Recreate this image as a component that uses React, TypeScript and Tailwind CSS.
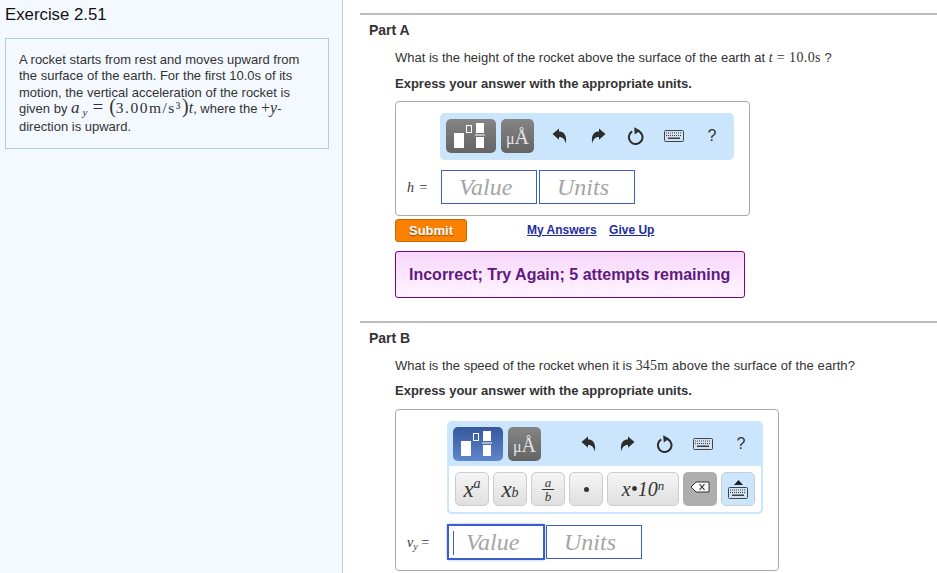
const SANS = "font-['Liberation_Sans',Arial,sans-serif]";
const SERIF = "font-['Liberation_Serif','Times_New_Roman',serif]";

function TemplateIcon() {
  return (
    <svg width="50" height="34" viewBox="0 0 50 34" fill="white">
      <rect x="8" y="14" width="10" height="15" />
      <rect x="20.5" y="6.5" width="5" height="7" fill="none" stroke="white" strokeWidth="1" />
      <rect x="30" y="4" width="8" height="10" />
      <rect x="29" y="15.5" width="10" height="1" />
      <rect x="30" y="18" width="8" height="11" />
    </svg>
  );
}

function UndoIcon({ flip = false }: { flip?: boolean }) {
  return (
    <svg width="15" height="16" viewBox="0 0 15 16" fill="#2c2c2c" className={flip ? "-scale-x-100" : "-translate-x-[1px]"}>
      <path d="M0.5 6 L7 0.5 L7 3.4 C11.8 3.4 15.2 6.8 13.8 15.5 C12.8 11.6 11.2 9 7 9 L7 11.8 Z" />
    </svg>
  );
}

function ResetIcon() {
  return (
    <svg width="18" height="18" viewBox="0 0 18 18" fill="none">
      <path d="M5.2 4.4 A6.8 6.8 0 1 0 11.4 4" stroke="#2c2c2c" strokeWidth="2" />
      <path d="M7.2 0.2 L13.2 3.6 L7.8 7.4 Z" fill="#2c2c2c" />
    </svg>
  );
}

function KeyboardIcon() {
  return (
    <svg width="20" height="12" viewBox="0 0 20 12">
      <rect x="0.5" y="0.5" width="19" height="11" rx="1" fill="#d5e2ee" stroke="#3c4650" />
      <path d="M2 3h16M2 5.5h16" stroke="#36404a" strokeWidth="1.2" strokeDasharray="1 1" />
      <path d="M4 8.3h12" stroke="#36404a" strokeWidth="1.4" />
    </svg>
  );
}

function Cell({ children }: { children: React.ReactNode }) {
  return <div className="flex h-[34px] w-[38px] items-center justify-center">{children}</div>;
}

function Key({ w = "w-[34px]", children }: { w?: string; children: React.ReactNode }) {
  return (
    <div
      className={`flex h-[34px] ${w} items-center justify-center rounded-[5px] border border-[#ccc] bg-gradient-to-b from-[#f5f5f5] to-[#e0e0e0] ${SERIF} text-[#333]`}
    >
      {children}
    </div>
  );
}

function KeyRow() {
  return (
    <div className="flex h-[48px] items-center gap-[4px] rounded-b-[5px] border-x-2 border-b-2 border-[#cbe5fd] bg-white pl-[6px]">
      <Key>
        <span className="text-[23px] italic leading-none">x</span>
        <span className="mb-[10px] text-[14px] italic leading-none">a</span>
      </Key>
      <Key>
        <span className="text-[23px] italic leading-none">x</span>
        <span className="mt-[8px] text-[14px] italic leading-none">b</span>
      </Key>
      <Key>
        <div className="flex flex-col items-center text-[13px] italic leading-[13px]">
          <span className="border-b border-[#333] px-[3px]">a</span>
          <span>b</span>
        </div>
      </Key>
      <Key>
        <span className="h-[5px] w-[5px] rounded-full bg-[#333]" />
      </Key>
      <Key w="w-[72px]">
        <span className="text-[20px] italic leading-none">x•10</span>
        <span className="mb-[8px] text-[13px] italic leading-none">n</span>
      </Key>
      <div className="flex h-[34px] w-[34px] items-center justify-center rounded-[5px] bg-[#aeaeae] pb-[4px]">
        <svg width="20" height="12" viewBox="0 0 20 12">
          <path d="M6 1 H19 V11 H6 L1 6 Z" fill="white" stroke="#333" />
          <path d="M9.5 3.2 L14.5 8.8 M14.5 3.2 L9.5 8.8" stroke="#333" strokeWidth="1.1" />
        </svg>
      </div>
      <div className="flex h-[34px] w-[34px] flex-col items-center justify-center gap-[2px] rounded-[5px] border border-[#ccc] bg-[#cbe5fd]">
        <svg width="9" height="5" viewBox="0 0 9 5">
          <path d="M4.5 0 L9 5 H0 Z" fill="#222" />
        </svg>
        <KeyboardIcon />
      </div>
    </div>
  );
}

function Toolbar({ expanded, width, active }: { expanded: boolean; width: string; active: boolean }) {
  return (
    <div className={`${width} overflow-hidden rounded-[5px] bg-[#cbe5fd]`}>
      <div className={`flex items-start pl-[6px] pr-[3px] pt-[6px] ${expanded ? "h-[45px]" : "h-[47px]"}`}>
        <div
          className={`h-[34px] w-[50px] rounded-[5px] bg-gradient-to-b ${
            active ? "from-[#35589f] to-[#5f87cb]" : "from-[#858585] to-[#646464]"
          }`}
        >
          <TemplateIcon />
        </div>
        <div
          className={`ml-[5px] flex h-[34px] w-[33px] items-end justify-center rounded-[5px] bg-gradient-to-b from-[#858585] to-[#646464] pb-[6px] ${SERIF} text-[#e4e4e4]`}
        >
          <span className="text-[16px] leading-none">μ</span>
          <span className="text-[20px] leading-none">Å</span>
        </div>
        <div className="ml-auto flex">
          <Cell>
            <UndoIcon />
          </Cell>
          <Cell>
            <UndoIcon flip />
          </Cell>
          <Cell>
            <ResetIcon />
          </Cell>
          <Cell>
            <KeyboardIcon />
          </Cell>
          <Cell>
            <span className="text-[16px] text-[#333]">?</span>
          </Cell>
        </div>
      </div>
      {expanded && <KeyRow />}
    </div>
  );
}

function PlaceholderInput({ focused = false, label }: { focused?: boolean; label: string }) {
  return (
    <div
      className={`relative flex h-[34px] w-[96px] items-center border border-[#3a5fcd] bg-white pl-[17px] ${SERIF} text-[24px] italic text-[#a5a5a5] ${
        focused ? "shadow-[0_0_3px_#3a5fcd] ring-1 ring-[#3a5fcd]" : ""
      }`}
    >
      {focused && <span className="absolute left-[4px] top-[5px] h-[24px] w-px bg-[#3a5fcd]" />}
      {label}
    </div>
  );
}

export default function App() {
  return (
    <div className={`flex h-[573px] w-[937px] overflow-hidden bg-white ${SANS} text-[#333]`}>
      <aside className="h-full w-[343px] shrink-0 border-r border-[#b3cde0] bg-[#f4f9ff] pl-[5px] pt-[6px]">
        <h1 className="text-[16.8px] leading-[18px] text-[#111]">Exercise 2.51</h1>
        <div className="mt-[14px] h-[111px] w-[324px] border border-[#b3cde0] pl-[13px] pt-[13px] text-[13px] leading-[16.3px]">
          <p>A rocket starts from rest and moves upward from</p>
          <p>the surface of the earth. For the first 10.0s of its</p>
          <p>motion, the vertical acceleration of the rocket is</p>
          <p className="h-[17px] whitespace-nowrap">
            given by{" "}
            <span className={`${SERIF} text-[17px] italic leading-[0]`}>
              a<span className="relative top-[3px] ml-[3px] text-[11px] leading-[0]">y</span>
            </span>
            <span className={`${SERIF} ml-[5px] mr-[6px] text-[19px] leading-[0]`}>=</span>
            <span className={`${SERIF} text-[20px] leading-[0]`}>(</span>
            <span className={`${SERIF} text-[15.5px] leading-[0] tracking-[1.5px]`}>3.00m/s³</span>
            <span className={`${SERIF} text-[20px] leading-[0]`}>)</span>
            <span className={`${SERIF} text-[16px] italic leading-[0]`}>t</span>, where the{" "}
            <span className={`${SERIF} text-[16px] leading-[0]`}>
              +<i>y</i>
            </span>
            -
          </p>
          <p className="mt-[1px]">direction is upward.</p>
        </div>
      </aside>

      <main className="flex-1 pl-[17px] pt-[13px]">
        <hr className="h-[2px] border-0 bg-[#bbb]" />
        <h2 className="mt-[8px] pl-[9px] text-[14px] font-bold leading-[15px]">Part A</h2>
        <div className="pl-[35px]">
          <p className="mt-[12px] h-[16px] text-[13px] leading-[16px]">
            What is the height of the rocket above the surface of the earth at{" "}
            <span className={`${SERIF} text-[14px] leading-none tracking-[0.4px]`}>
              <i>t</i> = 10.0s
            </span>{" "}
            ?
          </p>
          <p className="mt-[10px] text-[13px] font-bold leading-[16px]">Express your answer with the appropriate units.</p>

          <div className="mt-[9px] h-[115px] w-[355px] rounded-[4px] border border-[#aaa] pl-[44px] pt-[11px]">
            <Toolbar expanded={false} width="w-[294px]" active={false} />
            <div className="mt-[10px] flex items-center gap-[2px]">
              <div className={`-ml-[34px] w-[33px] pl-[1px] ${SERIF} text-[14px]`}>
                <i>h</i> <span className="ml-[2px]">=</span>
              </div>
              <PlaceholderInput label="Value" />
              <PlaceholderInput label="Units" />
            </div>
          </div>

          <div className="mt-[3px] flex items-center">
            <button className="h-[23px] w-[72px] rounded-[3px] border border-[#c96a00] bg-[#fb8103] text-[13px] font-bold text-white [text-shadow:0_1px_1px_#8a4a00]">
              Submit
            </button>
            <a className="mb-[2px] ml-[60px] text-[12px] font-bold text-[#1f2d9e] underline">My Answers</a>
            <a className="mb-[2px] ml-[12.5px] text-[12px] font-bold text-[#1f2d9e] underline">Give Up</a>
          </div>

          <div className="mt-[9px] flex h-[47px] w-[350px] items-center rounded-[3px] border border-[#800080] bg-gradient-to-b from-[#f8d6fc] to-[#fff5ff] pl-[13px] text-[16px] font-bold text-[#5f1a80]">
            Incorrect; Try Again; 5 attempts remaining
          </div>
        </div>

        <hr className="mt-[23px] h-[2px] border-0 bg-[#bbb]" />
        <h2 className="mt-[8px] pl-[9px] text-[14px] font-bold leading-[15px]">Part B</h2>
        <div className="pl-[35px]">
          <p className="mt-[12px] h-[16px] text-[13px] leading-[16px]">
            What is the speed of the rocket when it is{" "}
            <span className={`${SERIF} text-[14px] leading-none tracking-[0.2px]`}>345m</span>{" "}
            <span className="tracking-[0.1px]">above the surface of the earth?</span>
          </p>
          <p className="mt-[9px] text-[13px] font-bold leading-[16px]">Express your answer with the appropriate units.</p>

          <div className="mt-[10px] h-[162px] w-[384px] rounded-[4px] border border-[#aaa] pl-[51px] pt-[11px]">
            <Toolbar expanded width="w-[316px]" active />
            <div className="mt-[11px] flex items-center gap-[2px]">
              <div className={`-ml-[40px] w-[39px] ${SERIF} text-[14px]`}>
                <i>v</i>
                <span className="relative top-[3px] text-[10px] italic leading-none">y</span> =
              </div>
              <PlaceholderInput focused label="Value" />
              <PlaceholderInput label="Units" />
            </div>
          </div>
        </div>
      </main>
    </div>
  );
}
